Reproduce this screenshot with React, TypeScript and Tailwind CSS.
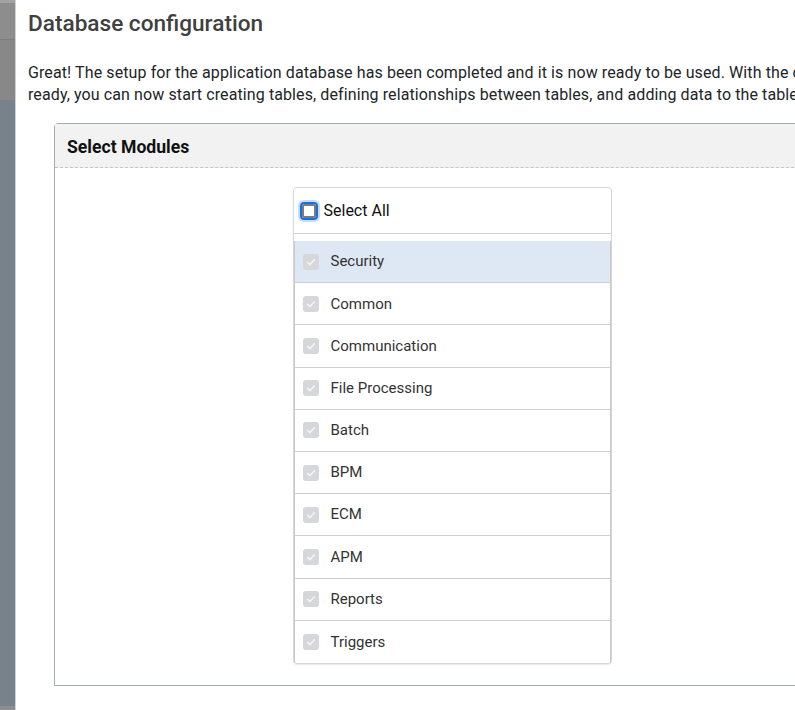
import React from "react";

const modules = [
  "Security",
  "Common",
  "Communication",
  "File Processing",
  "Batch",
  "BPM",
  "ECM",
  "APM",
  "Reports",
  "Triggers",
];

function DisabledCheck() {
  return (
    <span className="flex h-4 w-4 shrink-0 items-center justify-center rounded-[3px] bg-[#d6d7db]">
      <svg viewBox="0 0 16 16" className="h-3 w-3" fill="none">
        <path d="M3.5 8.5l3 3 6-6.5" stroke="#f4f4f6" strokeWidth="2" strokeLinecap="round" strokeLinejoin="round" />
      </svg>
    </span>
  );
}

export default function App() {
  return (
    <div className="flex h-[710px] w-[795px] overflow-hidden bg-white font-['Roboto',sans-serif]">
      <aside className="flex w-[16px] shrink-0 flex-col border-r border-[#cfd2d5]">
        <div className="h-[3px] bg-[#a3a3a3]" />
        <div className="h-[37px] border-b border-[#7d7d7d] bg-[#8d8d8d]" />
        <div className="h-[60px] bg-[#888888]" />
        <div className="flex-1 bg-[#78828b]" />
        <div className="h-[4px] bg-[#8d8d8d]" />
      </aside>

      <main className="w-[900px] shrink-0 pl-[12px] pt-[10px]">
        <h1 className="text-[22.6px] font-medium leading-[28px] text-[#404040]">Database configuration</h1>
        <p className="mt-[24px] whitespace-nowrap text-[16px] leading-[22px] tracking-[0.1px] text-[#212529]">
          Great! The setup for the application database has been completed and it is now ready to be used. With the database
          <br />
          ready, you can now start creating tables, defining relationships between tables, and adding data to the tables.
        </p>

        <section className="ml-[26px] mt-[17px] w-[796px] rounded-tl-[4px] border border-[#a5aaaf]">
          <div className="flex h-[44px] items-center border-b border-dashed border-[#c4c4c4] bg-[#f2f2f2] px-[12px] pt-[3px]">
            <h2 className="text-[17.6px] font-bold text-[#111]">Select Modules</h2>
          </div>
          <div className="flex justify-center pb-[21px] pt-[19px]">
            <div className="w-[319px] rounded-[4px] border border-[#d6d6d6] shadow-[0_1px_1px_rgba(0,0,0,0.08)]">
              <label className="flex h-[46px] items-center gap-[6px] border-b border-[#d0d0d0] pl-[6px] pt-[1px]">
                <span className="flex h-[18px] w-[18px] items-center justify-center rounded-[4px] border-2 border-[#1a6fe0] shadow-[0_0_0_2px_rgba(26,111,224,0.25)]">
                  <span className="h-[14px] w-[14px] rounded-[2px] border-2 border-[#7a7a80] bg-white" />
                </span>
                <span className="text-[16px] text-[#111]">Select All</span>
              </label>
              <ul className="mt-[7px] border-x border-[#c9c9c9]">
                {modules.map((m, i) => (
                  <li
                    key={m}
                    className={`flex h-[42.2px] items-center gap-[12px] pl-[8px] text-[15px] text-[#333] ${
                      i === 0 ? "bg-[#dee7f4]" : ""
                    } ${i < modules.length - 1 ? "border-b border-[#cfcfcf]" : ""}`}
                  >
                    <DisabledCheck />
                    <span>{m}</span>
                  </li>
                ))}
              </ul>
            </div>
          </div>
        </section>
      </main>
    </div>
  );
}
